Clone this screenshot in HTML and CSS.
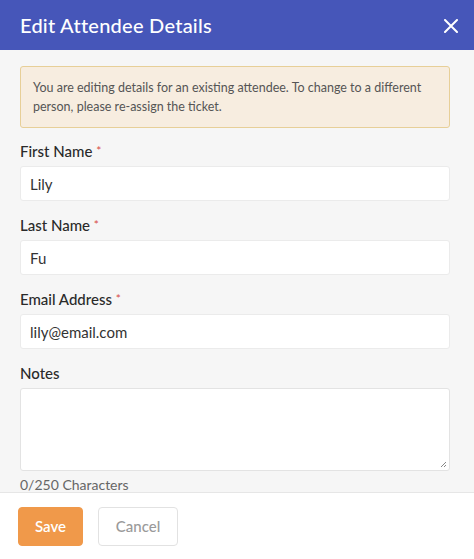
FILE: index.html
```html
<!DOCTYPE html>
<html>
<head>
<meta charset="utf-8">
<link rel="stylesheet" href="styles.css">
</head>
<body>
<div class="modal">
  <header class="modal-header">
    <h1 class="title">Edit Attendee Details</h1>
    <button class="close" aria-label="Close">
      <svg width="14" height="14" viewBox="0 0 14 14"><path d="M1 1 L13 13 M13 1 L1 13" stroke="#fff" stroke-width="2" stroke-linecap="round"/></svg>
    </button>
  </header>
  <main class="modal-body">
    <div class="alert">You are editing details for an existing attendee. To change to a different person, please re-assign the ticket.</div>
    <div class="field">
      <label class="label">First Name <span class="req">*</span></label>
      <div class="input">Lily</div>
    </div>
    <div class="field">
      <label class="label">Last Name <span class="req">*</span></label>
      <div class="input">Fu</div>
    </div>
    <div class="field">
      <label class="label">Email Address <span class="req">*</span></label>
      <div class="input">lily@email.com</div>
    </div>
    <div class="field notes">
      <label class="label">Notes</label>
      <div class="textarea">
        <svg class="grip" width="8" height="8" viewBox="0 0 8 8"><path d="M7 2 L2 7 M7 5 L5 7" stroke="#888" stroke-width="1"/></svg>
      </div>
      <div class="count">0/250 Characters</div>
    </div>
  </main>
  <footer class="modal-footer">
    <button class="btn save">Save</button>
    <button class="btn cancel">Cancel</button>
  </footer>
</div>
</body>
</html>
```
FILE: styles.css
```css
* { box-sizing: border-box; }
html, body { margin: 0; padding: 0; }
body {
  font-family: "Lato", "Noto Sans", sans-serif;
  background: #f6f6f6;
}
.modal {
  width: 474px;
  height: 559px;
  display: flex;
  flex-direction: column;
  overflow: hidden;
}
.modal-header {
  height: 50px;
  flex: none;
  background: #4656b9;
  display: flex;
  align-items: center;
  justify-content: space-between;
  padding: 0 16px 0 20px;
}
.title {
  margin: 0;
  color: #fff;
  font-size: 20px;
  font-weight: 500;
  letter-spacing: 0.25px;
}
.close {
  background: none;
  border: 0;
  padding: 0;
  width: 14px;
  height: 14px;
  display: flex;
  margin-top: 1px;
}
.modal-body {
  flex: 1;
  overflow: hidden;
  padding: 16px 24px 0 20px;
  background: #f6f6f6;
}
.alert {
  background: #f7ede0;
  border: 1px solid #e7cf98;
  border-radius: 3px;
  padding: 11px 12px;
  font-size: 12.5px;
  line-height: 19px;
  color: #555;
  margin-bottom: 13px;
}
.field { margin-bottom: 14px; }
.label {
  display: block;
  font-size: 15px;
  line-height: 20px;
  font-weight: 500;
  color: #2a2a2a;
  margin-bottom: 5px;
}
.req { color: #d9534f; font-size: 12px; vertical-align: top; }
.input {
  height: 35px;
  background: #fff;
  border: 1px solid #ebebeb;
  border-radius: 3px;
  padding: 0 9px;
  display: flex;
  align-items: center;
  font-size: 15px;
  color: #333;
}
.textarea {
  height: 83px;
  background: #fff;
  border: 1px solid #e3e3e3;
  border-radius: 3px;
  display: flex;
  justify-content: flex-end;
  align-items: flex-end;
  padding: 2px;
}
.grip { display: block; }
.count {
  margin-top: 6px;
  font-size: 14px;
  line-height: 16px;
  color: #666;
}
.modal-footer {
  height: 67px;
  flex: none;
  background: #fff;
  border-top: 1px solid #e6e6e6;
  display: flex;
  align-items: center;
  gap: 15px;
  padding: 0 18px;
}
.btn {
  height: 39px;
  border-radius: 4px;
  font-family: inherit;
  font-size: 15px;
  font-weight: 600;
  padding: 0 15px;
  cursor: pointer;
}
.save {
  width: 65px;
  background: #f0994a;
  border: 1px solid #f0994a;
  color: #fff;
}
.cancel {
  width: 80px;
  background: #fff;
  border: 1px solid #e2e2e2;
  color: #9a9a9a;
  font-weight: 500;
}
```
